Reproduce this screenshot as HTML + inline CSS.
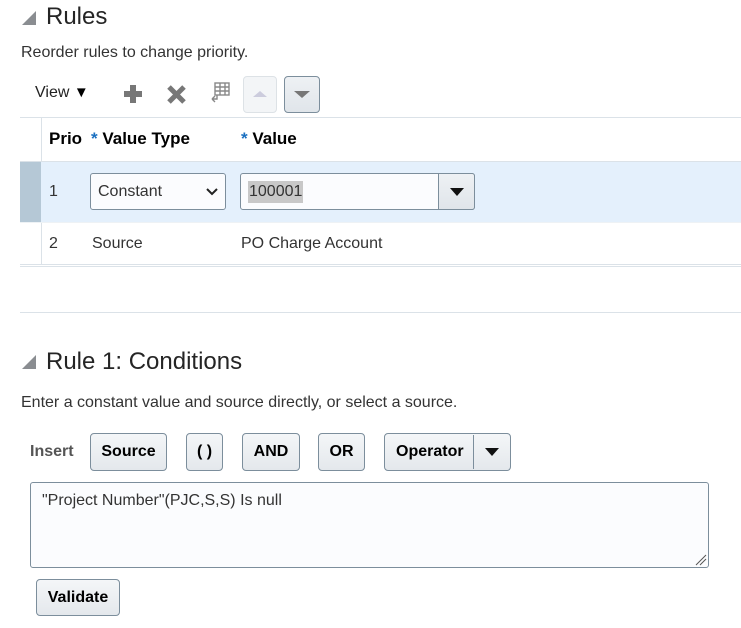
<!DOCTYPE html>
<html><head><meta charset="utf-8"><style>
*{box-sizing:border-box;margin:0;padding:0}
body{width:741px;height:628px;background:#fff;font-family:"Liberation Sans",Arial,sans-serif;color:#333;position:relative;overflow:hidden}
.a{position:absolute}
.tri{width:0;height:0;border-left:14px solid transparent;border-bottom:14px solid #8a8d91}
.h{font-size:24px;color:#252525}
.t{font-size:16px;color:#333}
.btn{position:absolute;border:1px solid #7c8e9c;border-radius:4px;background:linear-gradient(#f4f6f8,#e4e8ec);font-weight:bold;font-size:16px;color:#000;display:flex;align-items:center;justify-content:center}
.hd{font-weight:bold;font-size:17px;color:#000}
.st{color:#1a6fc0;font-weight:bold}
</style></head><body>
<div class="a tri" style="left:22px;top:11px"></div>
<div class="a h" style="left:46px;top:3px">Rules</div>
<div class="a t" style="left:21px;top:44px">Reorder rules to change priority.</div>

<div class="a" style="left:35px;top:84px;font-size:16px;color:#222">View <span style="font-size:15px;color:#000">&#9660;</span></div>
<svg class="a" style="left:122px;top:83px" width="22" height="22"><rect x="8" y="2" width="6" height="18" fill="#777"/><rect x="2" y="8" width="18" height="6" fill="#777"/></svg>
<svg class="a" style="left:166px;top:84px" width="21" height="21"><path d="M3 3L18 18M18 3L3 18" stroke="#777" stroke-width="5"/></svg>
<svg class="a" style="left:207px;top:81px" width="24" height="24" fill="none" stroke="#888" stroke-width="1.4"><rect x="8" y="2" width="14" height="12"/><path d="M8 6H22M8 10H22M13 2V14M18 2V14"/><path d="M10 14V18H5M5 18L8 15M5 18L8 21" /></svg>
<div class="a" style="left:243px;top:76px;width:34px;height:37px;border:1px solid #dde2e6;border-radius:4px;background:#f3f5f7"></div>
<div class="a" style="left:253px;top:91px;border-left:7px solid transparent;border-right:7px solid transparent;border-bottom:6px solid #ccd"></div>
<div class="a" style="left:284px;top:76px;width:36px;height:37px;border:1px solid #7c8e9c;border-radius:4px;background:linear-gradient(#eef1f4,#e0e5ea)"></div>
<div class="a" style="left:294px;top:91px;border-left:8px solid transparent;border-right:8px solid transparent;border-top:7px solid #777"></div>

<div class="a" style="left:20px;top:117px;width:721px;height:1px;background:#dbe2e8"></div>
<div class="a" style="left:41px;top:117px;width:1px;height:148px;background:#dbe2e8"></div>
<div class="a hd" style="left:49px;top:129px">Prio</div>
<div class="a hd" style="left:91px;top:129px"><span class="st">*</span> Value Type</div>
<div class="a hd" style="left:241px;top:129px"><span class="st">*</span> Value</div>
<div class="a" style="left:20px;top:161px;width:721px;height:1px;background:#dbe2e8"></div>
<div class="a" style="left:20px;top:162px;width:721px;height:60px;background:#e4f0fc"></div>
<div class="a" style="left:20px;top:162px;width:21px;height:60px;background:#b5c8d6"></div>
<div class="a t" style="left:49px;top:183px;font-size:16px">1</div>
<div class="a" style="left:90px;top:173px;width:136px;height:37px;border:1px solid #7c8e9c;border-radius:3px;background:#fbfcfe"></div>
<div class="a t" style="left:98px;top:183px;font-size:16px">Constant</div>
<svg class="a" style="left:206px;top:187px" width="12" height="9"><path d="M1 2L6 7L11 2" stroke="#222" stroke-width="2" fill="none"/></svg>
<div class="a" style="left:240px;top:173px;width:235px;height:37px;border:1px solid #7c8e9c;border-radius:3px;background:#fbfcfe"></div>
<div class="a" style="left:438px;top:173px;width:37px;height:37px;border:1px solid #7c8e9c;border-radius:0 3px 3px 0;background:linear-gradient(#eef1f4,#e0e5ea)"></div>
<div class="a" style="left:450px;top:188px;border-left:7px solid transparent;border-right:7px solid transparent;border-top:8px solid #111"></div>
<div class="a" style="left:248px;top:181px;background:#c8c8c8;font-size:16px;color:#333;padding:1px 1px;line-height:20px">100001</div>
<div class="a" style="left:20px;top:222px;width:721px;height:1px;background:#eef2f5"></div>
<div class="a t" style="left:49px;top:235px;font-size:16px">2</div>
<div class="a t" style="left:92px;top:235px;font-size:16px">Source</div>
<div class="a t" style="left:241px;top:235px;font-size:16px">PO Charge Account</div>
<div class="a" style="left:20px;top:264px;width:721px;height:1px;background:#dbe2e8"></div>
<div class="a" style="left:20px;top:266px;width:721px;height:1px;background:#dbe2e8"></div>
<div class="a" style="left:20px;top:312px;width:721px;height:1px;background:#dbe2e8"></div>

<div class="a tri" style="left:22px;top:355px"></div>
<div class="a h" style="left:46px;top:348px">Rule 1: Conditions</div>
<div class="a t" style="left:21px;top:394px">Enter a constant value and source directly, or select a source.</div>

<div class="a" style="left:30px;top:443px;font-weight:bold;font-size:16px;color:#555">Insert</div>
<div class="btn" style="left:90px;top:433px;width:77px;height:38px">Source</div>
<div class="btn" style="left:186px;top:433px;width:37px;height:38px">( )</div>
<div class="btn" style="left:242px;top:433px;width:58px;height:38px">AND</div>
<div class="btn" style="left:318px;top:433px;width:47px;height:38px">OR</div>
<div class="btn" style="left:384px;top:433px;width:127px;height:38px;justify-content:flex-start;padding-left:11px">Operator</div>
<div class="a" style="left:473px;top:435px;width:1px;height:34px;background:#7c8e9c"></div>
<div class="a" style="left:485px;top:448px;border-left:7px solid transparent;border-right:7px solid transparent;border-top:8px solid #111"></div>

<div class="a" style="left:30px;top:482px;width:679px;height:86px;border:1px solid #7c8e9c;border-radius:3px;background:#fbfcfe"></div>
<div class="a t" style="left:42px;top:492px;font-size:16px">"Project Number"(PJC,S,S) Is null</div>
<svg class="a" style="left:695px;top:554px" width="12" height="12"><path d="M1 11L11 1M5 11L11 5" stroke="#555" stroke-width="1"/></svg>

<div class="btn" style="left:36px;top:579px;width:84px;height:37px">Validate</div>
</body></html>
